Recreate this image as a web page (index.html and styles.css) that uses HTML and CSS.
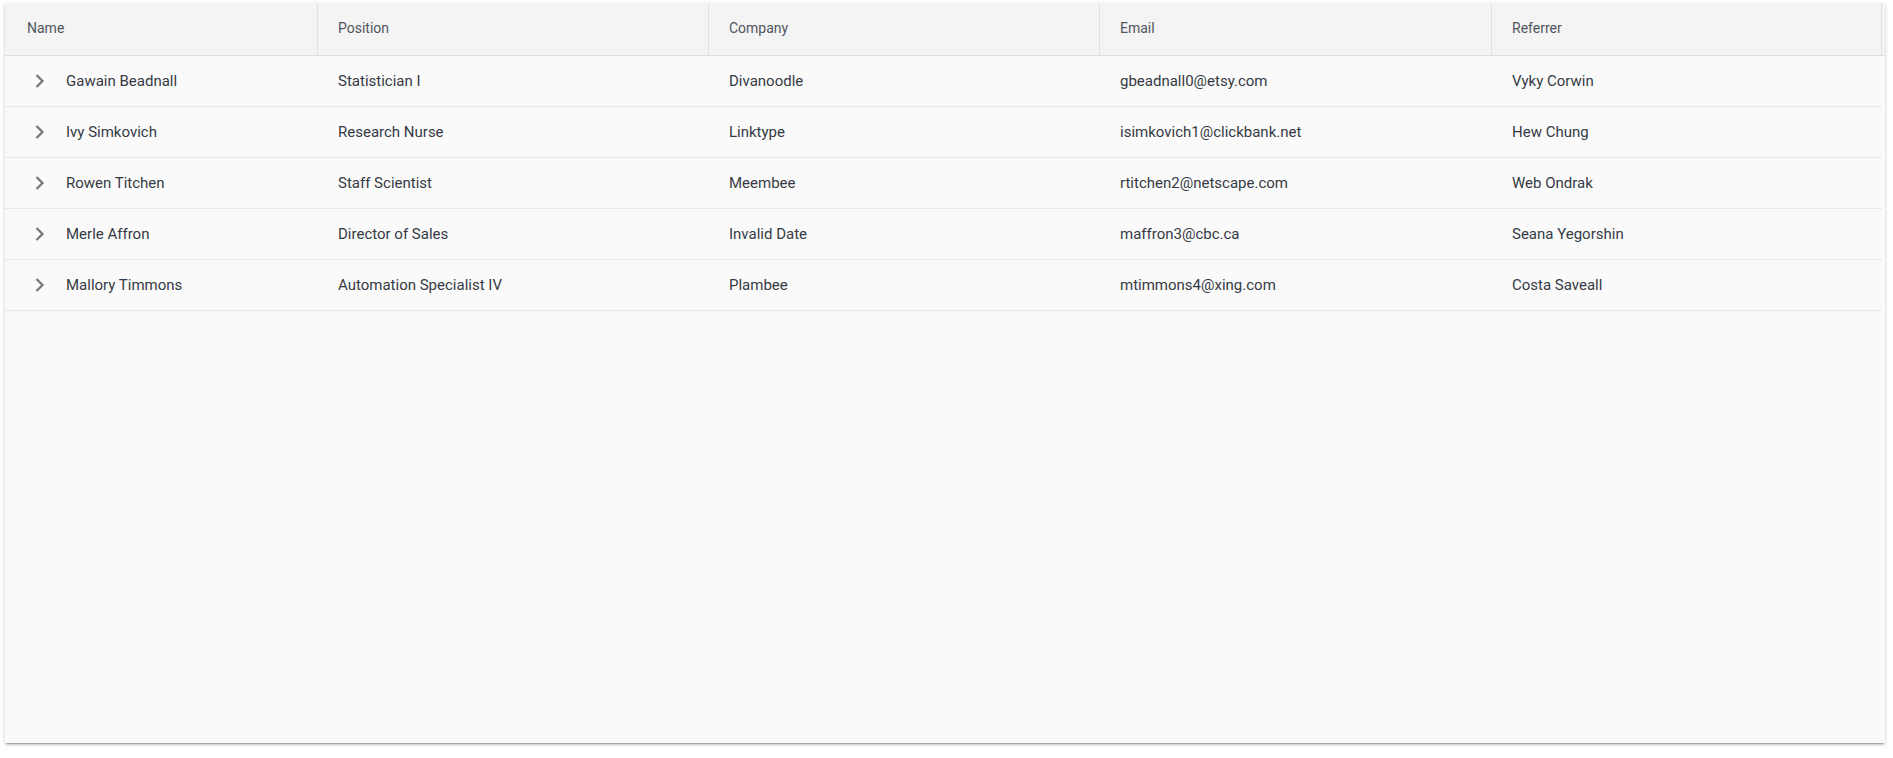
FILE: index.html
```html
<!DOCTYPE html>
<html>
<head>
<meta charset="utf-8">
<link rel="stylesheet" href="styles.css">
</head>
<body>
<div class="card">
  <div class="row head">
    <div class="cell c1 hcell">Name</div>
    <div class="cell hcell">Position</div>
    <div class="cell hcell">Company</div>
    <div class="cell hcell">Email</div>
    <div class="cell hcell">Referrer</div>
  </div>
  <div class="row">
    <div class="cell c1"><span class="chev"><svg width="12" height="16" viewBox="0 0 12 16"><path d="M2.5 2 L8.5 8 L2.5 14" fill="none" stroke="#777777" stroke-width="2.2"/></svg></span>Gawain Beadnall</div>
    <div class="cell">Statistician I</div>
    <div class="cell">Divanoodle</div>
    <div class="cell">gbeadnall0@etsy.com</div>
    <div class="cell">Vyky Corwin</div>
  </div>
  <div class="row">
    <div class="cell c1"><span class="chev"><svg width="12" height="16" viewBox="0 0 12 16"><path d="M2.5 2 L8.5 8 L2.5 14" fill="none" stroke="#777777" stroke-width="2.2"/></svg></span>Ivy Simkovich</div>
    <div class="cell">Research Nurse</div>
    <div class="cell">Linktype</div>
    <div class="cell">isimkovich1@clickbank.net</div>
    <div class="cell">Hew Chung</div>
  </div>
  <div class="row">
    <div class="cell c1"><span class="chev"><svg width="12" height="16" viewBox="0 0 12 16"><path d="M2.5 2 L8.5 8 L2.5 14" fill="none" stroke="#777777" stroke-width="2.2"/></svg></span>Rowen Titchen</div>
    <div class="cell">Staff Scientist</div>
    <div class="cell">Meembee</div>
    <div class="cell">rtitchen2@netscape.com</div>
    <div class="cell">Web Ondrak</div>
  </div>
  <div class="row">
    <div class="cell c1"><span class="chev"><svg width="12" height="16" viewBox="0 0 12 16"><path d="M2.5 2 L8.5 8 L2.5 14" fill="none" stroke="#777777" stroke-width="2.2"/></svg></span>Merle Affron</div>
    <div class="cell">Director of Sales</div>
    <div class="cell">Invalid Date</div>
    <div class="cell">maffron3@cbc.ca</div>
    <div class="cell">Seana Yegorshin</div>
  </div>
  <div class="row">
    <div class="cell c1"><span class="chev"><svg width="12" height="16" viewBox="0 0 12 16"><path d="M2.5 2 L8.5 8 L2.5 14" fill="none" stroke="#777777" stroke-width="2.2"/></svg></span>Mallory Timmons</div>
    <div class="cell">Automation Specialist IV</div>
    <div class="cell">Plambee</div>
    <div class="cell">mtimmons4@xing.com</div>
    <div class="cell">Costa Saveall</div>
  </div>
</div>
</body>
</html>
```
FILE: styles.css
```css
html, body {
  margin: 0;
  background: #ffffff;
}
body {
  padding: 3px 8px 15px 5px;
  font-family: Roboto, "Noto Sans", sans-serif;
}
.card {
  width: 1880px;
  height: 740px;
  background: #fafafa;
  box-shadow: 0 3px 1px -2px rgba(0,0,0,0.2), 0 2px 2px 0 rgba(0,0,0,0.14), 0 1px 5px 0 rgba(0,0,0,0.12);
  box-sizing: border-box;
}
.row {
  display: grid;
  grid-template-columns: 313px 391px 391px 392px 390px;
  height: 51px;
  border-bottom: 1px solid #e9e9e9;
  box-sizing: border-box;
  margin-right: 3px;
}
.head {
  height: 53px;
  background: #f4f4f4;
  border-bottom: 1px solid #e0e0e0;
  margin-right: 0;
  grid-template-columns: 313px 391px 391px 392px 390px 3px;
}
.cell {
  display: flex;
  align-items: center;
  padding-left: 20px;
  font-size: 15px;
  color: #353a45;
  white-space: nowrap;
}
.c1 {
  padding-left: 22px;
}
.hcell {
  font-size: 14px;
  color: #50545e;
  border-right: 1px solid #e0e0e0;
  padding-left: 20px;
  padding-bottom: 2px;
}
.head .c1 {
  padding-left: 22px;
}
.chev {
  display: inline-flex;
  width: 39px;
  padding-left: 7px;
  box-sizing: border-box;
}
```
